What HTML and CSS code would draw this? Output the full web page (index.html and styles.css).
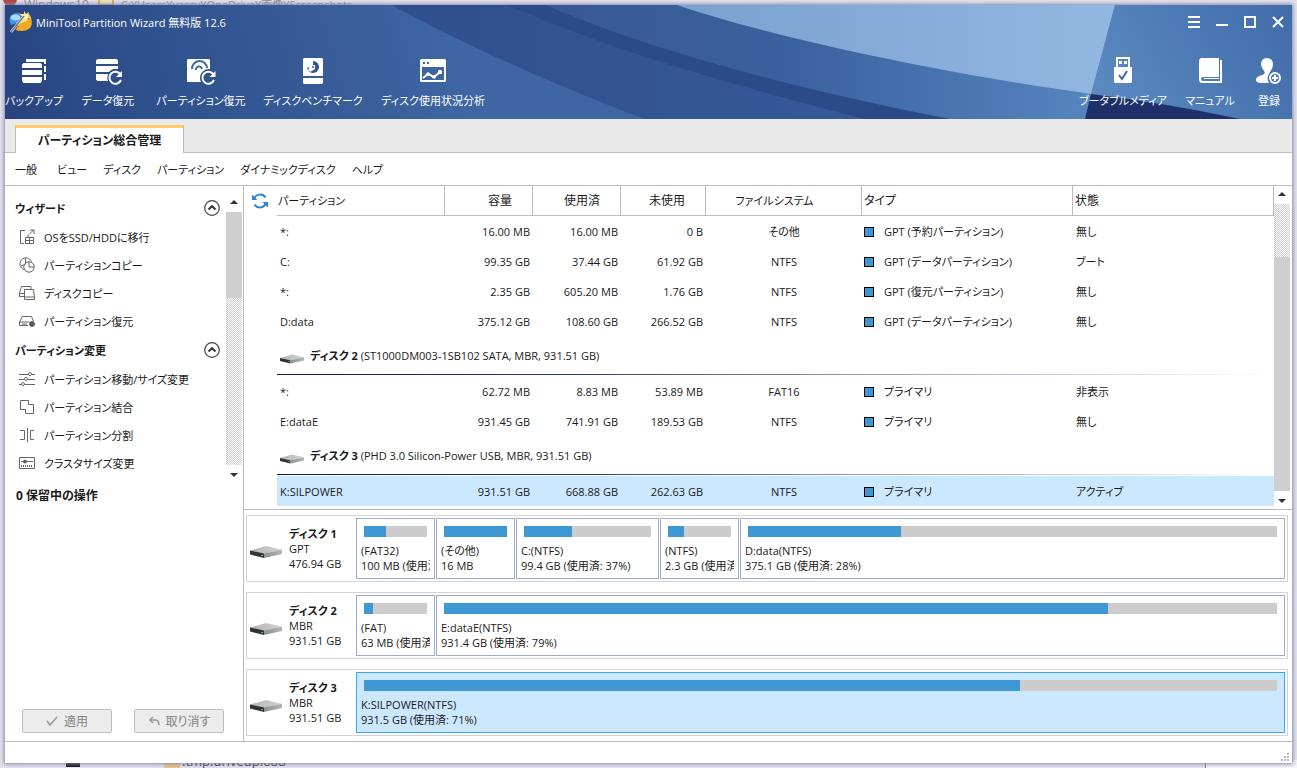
FILE: index.html
```html
<!DOCTYPE html>
<html lang="ja">
<head>
<meta charset="utf-8">
<meta name="viewport" content="width=device-width, initial-scale=1">
<title>MiniTool Partition Wizard 無料版 12.6</title>
<link rel="stylesheet" href="styles.css">
</head>
<body>
<svg class="defs" aria-hidden="true">
  <linearGradient id="dkTop" x1="0" x2="1"><stop offset="0" stop-color="#b4b4b4"/><stop offset="1" stop-color="#d2d2d2"/></linearGradient>
  <linearGradient id="dkSide" x1="0" x2="1"><stop offset="0" stop-color="#8d9092"/><stop offset="1" stop-color="#b3b7b9"/></linearGradient>
  <symbol id="disk" viewBox="0 0 32 12">
    <path d="M0 4.500L16 0l16 3.800L14 8z" fill="url(#dkTop)"/>
    <path d="M0 4.500L14 7.500V12L0 8.500z" fill="#303432"/>
    <path d="M14 7.500L32 3.800V8L14 12z" fill="url(#dkSide)"/>
    <rect x="11" y="9" width="2" height="1" fill="#3ddc3d"/>
  </symbol>
  <symbol id="collapse" viewBox="0 0 16 16">
    <circle cx="8" cy="8" r="7.300" fill="#fff" stroke="#444" stroke-width="1.200"/>
    <path d="M4.500 9.500L8 6.200l3.500 3.300" fill="none" stroke="#333" stroke-width="2"/>
  </symbol>
</svg>

<div class="desktop" aria-hidden="true">
  <span class="ghost ghost-dot"></span>
  <span class="ghost ghost-a">Windows10</span>
  <span class="ghost ghost-folder"></span>
  <span class="ghost ghost-b">C:¥Users¥yassy¥OneDrive¥画像¥Screenshots</span>
  <span class="ghost ghost-mark"></span>
  <span class="ghost ghost-file"></span>
  <span class="ghost ghost-c">.tmp.driveupload</span>
  <span class="ghost ghost-pane"></span>
</div>

<div class="window">
  <header class="banner">
    <svg class="banner-art" viewBox="5 5 1287 114" preserveAspectRatio="none" aria-hidden="true">
      <defs>
        <linearGradient id="g1" gradientUnits="userSpaceOnUse" x1="5" y1="119" x2="440" y2="5"><stop offset="0" stop-color="#28437f"/><stop offset=".35" stop-color="#2f528f"/><stop offset=".7" stop-color="#375b97"/><stop offset="1" stop-color="#3d66a2"/></linearGradient>
        <linearGradient id="g2" gradientUnits="userSpaceOnUse" x1="392" y1="0" x2="860" y2="0"><stop offset="0" stop-color="#2f508c"/><stop offset="1" stop-color="#365896"/></linearGradient>
        <linearGradient id="g3" gradientUnits="userSpaceOnUse" x1="545" y1="0" x2="1100" y2="0"><stop offset="0" stop-color="#385893"/><stop offset=".45" stop-color="#3a629e"/><stop offset="1" stop-color="#5786bf"/></linearGradient>
        <linearGradient id="g4" gradientUnits="userSpaceOnUse" x1="677" y1="0" x2="1110" y2="0"><stop offset="0" stop-color="#78a2cf"/><stop offset=".5" stop-color="#86abd9"/><stop offset="1" stop-color="#92b8e1"/></linearGradient>
        <linearGradient id="g5" gradientUnits="userSpaceOnUse" x1="1090" y1="119" x2="1292" y2="5"><stop offset="0" stop-color="#5d8bc2"/><stop offset="1" stop-color="#406da9"/></linearGradient>
      </defs>
      <path d="M5 5H1292V119H5z" fill="url(#g1)"/>
      <path d="M392 5C450 38 560 88 645 119H1292V5z" fill="url(#g2)"/>
      <path d="M545 5C650 50 790 88 950 119H1292V5z" fill="url(#g3)"/>
      <path d="M508 5H545C650 50 790 88 950 119H865C720 82 600 46 508 5z" fill="#2b4b87"/>
      <path d="M677 5C780 40 960 76 1091 94L1115 5z" fill="url(#g4)"/>
      <path d="M1115 5H1292V119H1085z" fill="url(#g5)"/>
      <path d="M1091 94Q1165 103 1240 119H1085z" fill="#1e3069"/>
    </svg>

    <div class="titlebar">
      <svg class="app-icon" viewBox="0 0 24 24" aria-hidden="true">
        <path d="M1 7c2-4 7-5 11-3l-1 8-9 3c-1-2-2-5-1-8z" fill="#3c9be0"/>
        <ellipse cx="6.500" cy="7.500" rx="5" ry="3" fill="#a9dcfa"/>
        <path d="M12 8l8-4c3 3 4 11 1 14-3 3-9 4-14 2z" fill="#f2a922"/>
        <path d="M12 8l8-4-2 7-9 3z" fill="#ffe078"/>
        <path d="M15 1l2 3 3-2-1 4 3 2-4 1-1 3-2-3-4 1 2-3-2-3h4z" fill="#ffe9a0"/>
        <path d="M15 6L2 22" stroke="#f3f4f7" stroke-width="2.600"/><path d="M15 6L2 22" stroke="#666c80" stroke-width="1.200"/>
        <path d="M10 3l1 1M19 8l1 1M8 16l2 1" stroke="#e0542e" stroke-width="1.200"/>
      </svg>
      <h1 class="title">MiniTool Partition Wizard 無料版 12.6</h1>
      <div class="controls">
        <button aria-label="メニュー"><svg viewBox="0 0 12 12"><path d="M0 1h12M0 6h12M0 11h12"/></svg></button>
        <button aria-label="最小化"><svg viewBox="0 0 12 12"><path d="M0 9h12"/></svg></button>
        <button aria-label="最大化"><svg viewBox="0 0 12 12"><path d="M1 1h10v10H1z"/></svg></button>
        <button aria-label="閉じる"><svg viewBox="0 0 12 12"><path d="M1 1l10 10M11 1L1 11"/></svg></button>
      </div>
    </div>

    <nav class="toolbar" aria-label="ツール">
      <button class="tool w50">
        <svg viewBox="0 0 32 28"><path d="M8 2h20v5h-2V5H8zM26 9h2v6h-2zM26 17h2v6h-2z"/><path d="M5.500 6h17l1.500 1.500V11H4V7.500zM4 13h20v5H4zM4 20h20v4l-1.500 2h-17L4 24z"/></svg>
        <span>バックアップ</span></button>
      <button class="tool w50">
        <svg viewBox="0 0 32 28"><path d="M5.500 2h19L26 3.500V7H4V3.500zM4 9h22v3a9 9 0 0 0-9 3H4zM4 17h12a9 9 0 0 0 0 7H5.500L4 22.500z"/><path class="line" d="M28.500 17.500a6 6 0 1 0 .5 5.500"/><path d="M30 14v6h-6z"/></svg>
        <span>データ復元</span></button>
      <button class="tool w88">
        <svg viewBox="0 0 32 28"><path d="M3 2h21l1 1v9a9 9 0 0 0-9 13H2V3z"/><g class="cut"><path d="M7 12a7.500 7.500 0 0 1 15-1"/><path d="M11 13a3 3 0 0 1 6-1"/></g><circle cx="14" cy="13" r="1.300"/><path class="line" d="M28.500 17.500a6 6 0 1 0 .5 5.500"/><path d="M30.500 14v6h-6z"/></svg>
        <span>パーティション復元</span></button>
      <button class="tool w88">
        <svg viewBox="0 0 32 28"><path d="M7 1h18l1 1v17H6V2zM6 21h20v5l-1 1H7l-1-1z"/><circle cx="16" cy="10" r="6" fill="#33558f"/><path d="M16 10V3l-8 1v7z"/><path d="M11 13l3-5h4v4l-5 3z"/><circle cx="16" cy="10" r="1" fill="#33558f"/></svg>
        <span>ディスクベンチマーク</span></button>
      <button class="tool w104">
        <svg viewBox="0 0 32 28"><path fill-rule="evenodd" d="M4 2h24l1 1v21l-1 1H4l-1-1V3zM5 10v13h22V10zM6 5v2h2V5zm4 0v2h2V5z"/><path class="line" d="M6 21l5-4 6 3 6-5"/><circle cx="11" cy="17" r="1.800"/><circle cx="17" cy="20" r="1.800"/><circle cx="23" cy="15" r="2.200"/></svg>
        <span>ディスク使用状況分析</span></button>
      <button class="tool w80 first-right">
        <svg viewBox="0 0 32 28"><path fill-rule="evenodd" d="M9 0h14v10h2v15l-1 1H8l-1-1V10h2zM11 2v8h10V2zM12 4h3v3h-3zm5 0h3v3h-3z"/><path class="cut" d="M12 18l3 4 5-8"/></svg>
        <span>ブータブルメディア</span></button>
      <button class="tool w46">
        <svg viewBox="0 0 32 28"><path d="M7 1h18v17H8q-2 1-2 3v2q-1-1-1-3V3z"/><path d="M26 3h2v23H8q-3 0-3-4t3-4h17v2H9q-2 0-2 2t2 2h17z"/><path d="M10 21h15v1H10z"/></svg>
        <span>マニュアル</span></button>
      <button class="tool w24">
        <svg viewBox="0 0 32 28"><path d="M14 1c4 0 6 3 6 6 0 4-2 6-3 8l-1 2c-2 3-2 6 0 9H8c-3 0-5-1-5-3 0-4 5-4 8-6 1-1 1-2 0-3-1-2-3-4-3-7 0-3 2-6 6-6z"/><circle cx="22" cy="21" r="5" fill="#4b79b5" stroke="#fff" stroke-width="2"/><path d="M21 18h2v2h2v2h-2v2h-2v-2h-2v-2h2z"/></svg>
        <span>登録</span></button>
    </nav>
  </header>

  <div class="tabs" role="tablist"><button class="tab" role="tab" aria-selected="true">パーティション総合管理</button></div>

  <nav class="menubar" aria-label="メニューバー">
    <button>一般</button><button>ビュー</button><button>ディスク</button><button>パーティション</button><button>ダイナミックディスク</button><button>ヘルプ</button>
  </nav>

  <div class="content">
    <aside class="sidebar">
      <div class="side-top">
        <div class="side-list">
          <h2 class="side-head">ウィザード<button aria-label="ウィザードを折りたたむ"><svg><use href="#collapse"/></svg></button></h2>
          <ul>
            <li><a href="#"><svg viewBox="0 0 16 16"><path d="M6 1.500H1.500v13H5M10 5.500L14.500 1M11 1h4v4M6.500 8.500h8v6h-8zM9 8v-2M10.500 9v6M6.500 11.500h8"/></svg>OSをSSD/HDDに移行</a></li>
            <li><a href="#"><svg viewBox="0 0 16 16"><path d="M12.500 4.500A6 6 0 1 0 5 12.500M6.500 1v6L2 9"/><circle cx="10" cy="10" r="5.200"/><path d="M10 5v5h5"/></svg>パーティションコピー</a></li>
            <li><a href="#"><svg viewBox="0 0 16 16"><path d="M5 11.500H.5V8l2-6.500H12V4M1 8.500h4"/><path d="M5.500 4.500h9l1 7.500v2.500h-10zM5.500 12h10"/></svg>ディスクコピー</a></li>
            <li><a href="#"><svg viewBox="0 0 16 16"><path d="M.5 9l3-5.500h9l2 5M9 12.500H.5V9h10M3 11h5"/><circle cx="13" cy="11" r="2.500" fill="#555"/></svg>パーティション復元</a></li>
          </ul>
          <h2 class="side-head">パーティション変更<button aria-label="パーティション変更を折りたたむ"><svg><use href="#collapse"/></svg></button></h2>
          <ul>
            <li><a href="#"><svg viewBox="0 0 16 16"><path d="M0 3.500h9M13 3.500h3M0 8.500h5M9 8.500h7M0 13.500h2M6 13.500h10"/><circle cx="11" cy="3" r="1.500"/><circle cx="7" cy="8" r="1.500"/><circle cx="4" cy="13" r="1.500"/></svg>パーティション移動/サイズ変更</a></li>
            <li><a href="#"><svg viewBox="0 0 16 16"><path d="M1.500 1.500h8v4h5v9h-8v-4h-5z"/></svg>パーティション結合</a></li>
            <li><a href="#"><svg viewBox="0 0 16 16"><path d="M1 3.500h4.500v9H1M8.500 1v14M15 3.500h-3.500v9H15"/></svg>パーティション分割</a></li>
            <li><a href="#"><svg viewBox="0 0 16 16"><path d="M.5 2.500h15v11H.5zM2 6.500h12"/><path d="M2 11h12" stroke-dasharray="1 1" stroke-width="2"/><circle cx="6" cy="6.500" r="1.500" fill="#555"/></svg>クラスタサイズ変更</a></li>
          </ul>
        </div>
        <div class="scroll side-scroll"><i class="arrow up"></i><div class="track"><div class="thumb"></div></div><i class="arrow down"></i></div>
      </div>
      <h2 class="pending">0 保留中の操作</h2>
      <div class="actions">
        <button disabled><svg viewBox="0 0 12 12"><path d="M1 6l3 4 7-8"/></svg>適用</button>
        <button disabled><svg viewBox="0 0 12 12"><path d="M5 2L2 5l3 3M2 5h5q4 0 4 5"/></svg>取り消す</button>
      </div>
    </aside>

    <main class="main">
      <section class="list">
        <button class="refresh" aria-label="更新"><svg viewBox="0 0 16 16"><path d="M2 6.500A6.300 6.300 0 0 1 13.500 4.500M14 9.500A6.300 6.300 0 0 1 2.500 11.500"/><path class="fill" d="M0 1.500V7h5.500zM16 9v5.500L10.500 9z"/></svg></button>
        <table class="parts">
          <colgroup><col class="c1"><col class="c2"><col class="c2"><col class="c4"><col class="c5"><col class="c6"><col></colgroup>
          <thead><tr><th class="l">パーティション</th><th>容量</th><th>使用済</th><th>未使用</th><th>ファイルシステム</th><th class="l">タイプ</th><th class="l">状態</th></tr></thead>
          <tbody>
            <tr><td>*:</td><td>16.00 MB</td><td>16.00 MB</td><td>0 B</td><td>その他</td><td><i class="sq"></i>GPT (予約パーティション)</td><td>無し</td></tr>
            <tr><td>C:</td><td>99.35 GB</td><td>37.44 GB</td><td>61.92 GB</td><td>NTFS</td><td><i class="sq"></i>GPT (データパーティション)</td><td>ブート</td></tr>
            <tr><td>*:</td><td>2.35 GB</td><td>605.20 MB</td><td>1.76 GB</td><td>NTFS</td><td><i class="sq"></i>GPT (復元パーティション)</td><td>無し</td></tr>
            <tr><td>D:data</td><td>375.12 GB</td><td>108.60 GB</td><td>266.52 GB</td><td>NTFS</td><td><i class="sq"></i>GPT (データパーティション)</td><td>無し</td></tr>
            <tr class="group"><th colspan="7" scope="rowgroup"><svg><use href="#disk"/></svg><b>ディスク 2</b> (ST1000DM003-1SB102 SATA, MBR, 931.51 GB)</th></tr>
            <tr><td>*:</td><td>62.72 MB</td><td>8.83 MB</td><td>53.89 MB</td><td>FAT16</td><td><i class="sq"></i>プライマリ</td><td>非表示</td></tr>
            <tr><td>E:dataE</td><td>931.45 GB</td><td>741.91 GB</td><td>189.53 GB</td><td>NTFS</td><td><i class="sq"></i>プライマリ</td><td>無し</td></tr>
            <tr class="group"><th colspan="7" scope="rowgroup"><svg><use href="#disk"/></svg><b>ディスク 3</b> (PHD 3.0 Silicon-Power USB, MBR, 931.51 GB)</th></tr>
            <tr class="selected"><td>K:SILPOWER</td><td>931.51 GB</td><td>668.88 GB</td><td>262.63 GB</td><td>NTFS</td><td><i class="sq"></i>プライマリ</td><td>アクティブ</td></tr>
          </tbody>
        </table>
        <div class="scroll list-scroll"><i class="arrow up"></i><div class="track"><div class="thumb"></div></div><i class="arrow down"></i></div>
      </section>

      <section class="map">
        <article class="card">
          <svg><use href="#disk"/></svg>
          <div class="info"><b>ディスク 1</b><span>GPT</span><span>476.94 GB</span></div>
          <div class="blocks">
            <div class="block s"><div class="bar"><div style="width:35%"></div></div><p>(FAT32)</p><p>100 MB (使用済</p></div>
            <div class="block s"><div class="bar"><div style="width:100%"></div></div><p>(その他)</p><p>16 MB</p></div>
            <div class="block m"><div class="bar"><div style="width:38%"></div></div><p>C:(NTFS)</p><p>99.4 GB (使用済: 37%)</p></div>
            <div class="block s"><div class="bar"><div style="width:26%"></div></div><p>(NTFS)</p><p>2.3 GB (使用済</p></div>
            <div class="block"><div class="bar"><div style="width:29%"></div></div><p>D:data(NTFS)</p><p>375.1 GB (使用済: 28%)</p></div>
          </div>
        </article>
        <article class="card">
          <svg><use href="#disk"/></svg>
          <div class="info"><b>ディスク 2</b><span>MBR</span><span>931.51 GB</span></div>
          <div class="blocks">
            <div class="block s"><div class="bar"><div style="width:14%"></div></div><p>(FAT)</p><p>63 MB (使用済</p></div>
            <div class="block"><div class="bar"><div style="width:79.700%"></div></div><p>E:dataE(NTFS)</p><p>931.4 GB (使用済: 79%)</p></div>
          </div>
        </article>
        <article class="card">
          <svg><use href="#disk"/></svg>
          <div class="info"><b>ディスク 3</b><span>MBR</span><span>931.51 GB</span></div>
          <div class="blocks">
            <div class="block on"><div class="bar"><div style="width:71.800%"></div></div><p>K:SILPOWER(NTFS)</p><p>931.5 GB (使用済: 71%)</p></div>
          </div>
        </article>
      </section>
    </main>
  </div>
  <footer class="status"><svg viewBox="0 0 8 8" aria-hidden="true"><path d="M6 0h2v2H6zM3 3h2v2H3zM6 3h2v2H6zM0 6h2v2H0zM3 6h2v2H3zM6 6h2v2H6z"/></svg></footer>
</div>
</body>
</html>
```
FILE: styles.css
```css
* { box-sizing: border-box; }
html, body { margin: 0; height: 100%; }
body {
  padding: 5px;
  overflow: hidden;
  background: #e2e2ea;
  color: #1a1a1a;
  font-family: "Open Sans", "Noto Sans CJK JP", sans-serif;
  font-size: 11px;
  line-height: 15px;
  font-feature-settings: "palt";
}
button { margin: 0; padding: 0; border: 0; background: none; color: inherit; font: inherit; font-feature-settings: inherit; }
h1, h2, p, ul { margin: 0; padding: 0; font-size: inherit; }
ul { list-style: none; }
a { color: inherit; text-decoration: none; }
.defs { position: absolute; width: 0; height: 0; }

/* fragments of the windows lying behind */
.desktop { position: absolute; inset: 0; z-index: -1; overflow: hidden; }
.ghost { position: absolute; white-space: nowrap; color: #8b8b8f; font-size: 12px; }
.ghost-dot { left: 3px; top: -8px; width: 14px; height: 14px; border-radius: 7px; background: #b5453c; }
.ghost-a { left: 24px; top: -3px; }
.ghost-folder { left: 98px; top: -8px; width: 16px; height: 14px; border: 2px solid #d9ae4c; background: #f6e6b4; }
.ghost-b { left: 121px; top: -3px; font-size: 11px; }
.ghost-mark { left: 66px; bottom: 1px; width: 14px; height: 4px; background: #16161c; }
.ghost-file { left: 164px; bottom: 0; width: 16px; height: 5px; background: #ecc587; }
.ghost-c { left: 182px; bottom: -1px; color: #3c3c44; font-size: 13px; }
.ghost-pane { left: 1205px; right: 0; bottom: 0; height: 8px; border-left: 1px solid #77778a; background: #f4f4f8; }

.window {
  display: flex;
  flex-direction: column;
  min-height: 100%;
  background: #fff;
  box-shadow: 0 0 4px 1px #8583ad;
}

/* banner */
.banner { position: relative; height: 114px; color: #fff; }
.banner-art { position: absolute; inset: 0; width: 100%; height: 100%; }
.titlebar { position: relative; display: flex; align-items: center; height: 34px; padding: 0 8px 0 4px; }
.app-icon { width: 24px; height: 24px; margin-right: 3px; }
.title { font-weight: 400; }
.controls { display: flex; gap: 16px; margin-left: auto; }
.controls svg { display: block; width: 12px; height: 12px; fill: none; stroke: #fff; stroke-width: 2; }
.toolbar { position: relative; display: flex; gap: 24px; padding: 18px 11px 0 4px; }
.tool { display: flex; flex-direction: column; align-items: center; gap: 8px; white-space: nowrap; }
.tool svg { width: 32px; height: 28px; fill: #fff; }
.tool .line { fill: none; stroke: #fff; stroke-width: 2; }
.tool .cut { fill: none; stroke: #3f69a5; stroke-width: 2; }
.w24 { width: 24px; }
.w46 { width: 46px; }
.w50 { width: 50px; }
.w80 { width: 80px; }
.w88 { width: 88px; }
.w104 { width: 104px; }
.first-right { margin-left: auto; }

/* tabs and menus */
.tabs { display: flex; align-items: flex-end; height: 34px; padding-left: 10px; border-bottom: 1px solid #bcbcbc; background: #e9e9e9; }
.tab { width: 169px; height: 28px; margin-bottom: -1px; border: 1px solid #bcbcbc; border-top: 3px solid #ffcc66; border-bottom: 0; background: #fff; font-size: 12px; font-weight: 700; }
.menubar { display: flex; gap: 16px; height: 33px; padding-left: 10px; border-bottom: 1px solid #bcbcbc; }
.menubar button { min-width: 26px; text-align: left; }

.content { display: flex; flex: 1; }

/* sidebar */
.sidebar { display: flex; flex-direction: column; width: 239px; border-right: 1px solid #bcbcbc; }
.side-top { display: flex; height: 294px; padding-top: 7px; }
.side-list { flex: 1; }
.side-head { display: flex; align-items: center; justify-content: space-between; height: 30px; padding: 0 6px 0 10px; }
.side-head svg { display: block; width: 16px; height: 16px; }
.side-list a { display: flex; align-items: center; gap: 9px; height: 28px; padding-left: 14px; white-space: nowrap; }
.side-list a svg { width: 16px; height: 16px; fill: none; stroke: #666; }
.pending { height: 32px; padding-left: 11px; font-size: 12px; line-height: 32px; }
.actions { display: flex; gap: 22px; margin-top: auto; padding: 0 0 8px 17px; font-size: 12px; }
.actions button { display: flex; align-items: center; justify-content: center; gap: 6px; width: 90px; height: 24px; border: 1px solid #bfbfbf; border-radius: 2px; background: #ececec; color: #838383; }
.actions svg { width: 12px; height: 12px; fill: none; stroke: #999; stroke-width: 1.5; }

/* scroll bars */
.scroll { display: flex; flex-direction: column; align-items: center; width: 16px; }
.arrow { width: 8px; height: 4px; background: #333; }
.up { clip-path: polygon(50% 0, 100% 100%, 0 100%); }
.down { clip-path: polygon(0 0, 100% 0, 50% 100%); }
.track { flex: 1; width: 16px; background: repeating-conic-gradient(#d0d0d0 0 25%, #fff 0 50%) 0 0 / 2px 2px; }
.thumb { background: #cfcfcf; }
.side-scroll { gap: 8px; margin-right: 1px; padding: 7px 0 3px; }
.side-scroll .thumb { height: 86px; }
.list-scroll { gap: 8px; margin-right: 2px; padding: 6px 0; }
.list-scroll .track { display: flex; flex-direction: column; justify-content: flex-end; }
.list-scroll .thumb { height: 234px; }

/* partition list */
.main { display: flex; flex: 1; flex-direction: column; min-width: 0; }
.list { display: flex; align-items: flex-start; padding-bottom: 3px; border-bottom: 1px solid #bcbcbc; }
.refresh { width: 33px; padding: 7px 8px; }
.refresh svg { display: block; width: 16px; height: 16px; fill: none; stroke: #2b86cc; stroke-width: 2; }
.refresh .fill { fill: #2b86cc; stroke: none; }
.list-scroll { align-self: stretch; margin-bottom: -3px; }
.parts { flex: 1; min-width: 0; border-collapse: separate; border-spacing: 0; table-layout: fixed; }
.c1 { width: 168px; }
.c2 { width: 88px; }
.c4 { width: 85px; }
.c5 { width: 156px; }
.c6 { width: 211px; }
.parts th, .parts td { height: 30px; padding: 0 3px; white-space: nowrap; }
.parts td { text-align: right; }
.parts thead th { padding: 0 20px 0 2px; border-right: 1px solid #bcbcbc; border-bottom: 1px solid #bcbcbc; font-size: 12px; font-weight: 400; text-align: right; }
.parts thead .l { text-align: left; }
.parts thead th:first-child { padding-left: 1px; font-size: 11px; }
.parts thead th:nth-child(5) { font-size: 11px; text-align: center; }
.parts td:first-child, .parts td:nth-child(n+6) { text-align: left; }
.parts td:nth-child(5) { text-align: center; }
.parts td:nth-child(6) { padding-left: 2px; }
.sq { display: inline-block; width: 10px; height: 10px; margin-right: 10px; border: 1px solid #000; background: #3e98d3; vertical-align: -1px; }
.parts .group th { height: 40px; background: linear-gradient(90deg, #15154f, #2f3a70 30%, #9d9bbd 60%, #fff) 0 38px / 100% 1px no-repeat; font-weight: 400; text-align: left; }
.group svg { width: 24px; height: 10px; margin-right: 6px; vertical-align: -4px; }
.selected { background: #cce8ff; }

/* disk map */
.map { display: flex; flex: 1; flex-direction: column; gap: 10px; padding: 5px 4px 5px 2px; }
.card { display: flex; align-items: center; height: 67px; padding: 2px; border: 1px solid #d3d3df; }
.card > svg { width: 32px; height: 12px; margin: 6px 7px 0 1px; }
.info { display: flex; flex-direction: column; width: 67px; }
.blocks { display: flex; flex: 1; gap: 1px; min-width: 0; height: 61px; }
.block { flex: 1; min-width: 0; padding: 7px 4px 0; border: 1px solid #9fadc8; }
.s { flex: none; width: 79px; }
.m { flex: none; width: 143px; }
.on { border-color: #3ba5f8; background: #cce8ff; }
.bar { height: 11px; margin: 0 3px 6px; background: #ccc; }
.bar div { height: 11px; background: #3e98d3; }
.block p { overflow: hidden; white-space: nowrap; }

.status { display: flex; align-items: flex-end; justify-content: flex-end; height: 22px; padding: 2px 3px; border-top: 1px solid #bcbcbc; }
.status svg { width: 8px; height: 8px; fill: #bbb; }
```
